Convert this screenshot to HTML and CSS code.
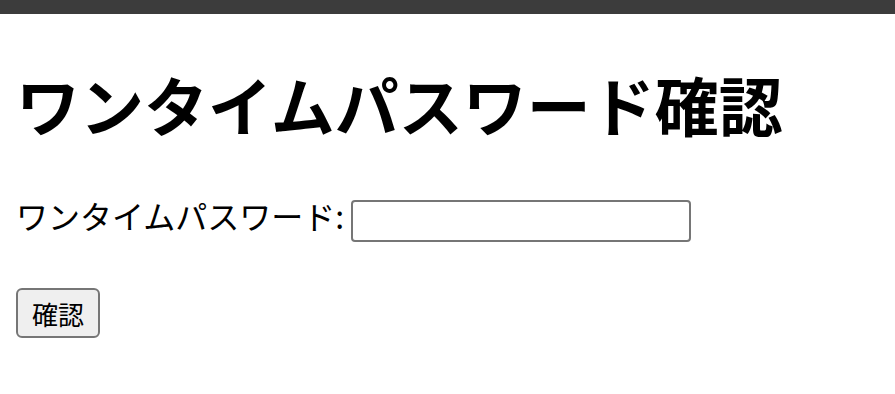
FILE: index.html
```html
<!DOCTYPE html>
<html lang="ja">

<head>
    <meta charset="UTF-8" />
    <title>ワンタイムパスワード確認</title>
    <link rel="stylesheet" href="styles.css">
</head>

<body>
    <div class="top-bar"></div>
    <div class="content">
        <h1>ワンタイムパスワード確認</h1>
        <form action="#" method="post">
            <label for="otp">ワンタイムパスワード:</label>
            <input type="text" id="otp" name="otp" />
            <br><br>
            <button type="submit">確認</button>
        </form>
    </div>
</body>

</html>
```

FILE: styles.css
```css
body {
    margin: 0;
    font-family: "Noto Sans CJK JP", sans-serif;
    font-size: 32px;
    color: black;
    background-color: white;
}

.top-bar {
    height: 14px;
    background-color: #3c3c3c;
}

.content {
    padding: 0 16px;
}

h1 {
    font-size: 64px;
    font-weight: bold;
    margin: 43px 0;
}

label {
    font-size: 32px;
}

input {
    box-sizing: border-box;
    width: 340px;
    height: 42px;
    border: 2px solid #767676;
    border-radius: 4px;
    font-size: 26px;
}

button {
    box-sizing: border-box;
    width: 84px;
    height: 50px;
    background-color: #efefef;
    border: 2px solid #767676;
    border-radius: 6px;
    font-family: "Noto Sans CJK JP", sans-serif;
    font-size: 26px;
    padding: 0;
}
```
